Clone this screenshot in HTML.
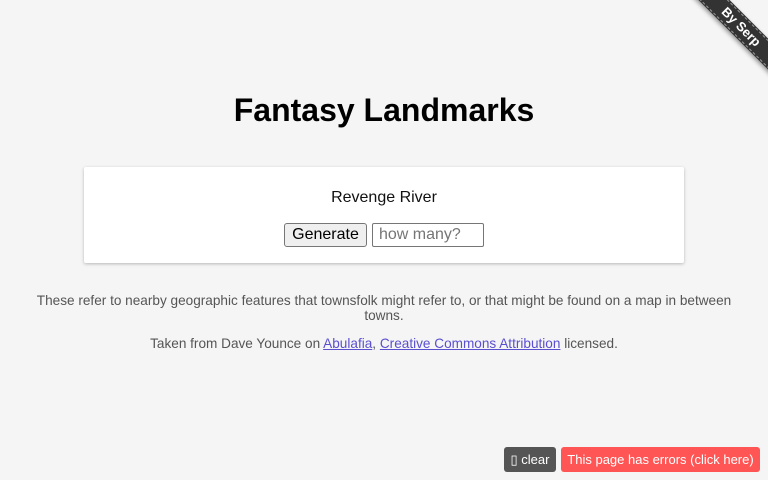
<!DOCTYPE html>
<html><head><meta charset="utf-8"><style>
html,body{margin:0;padding:0;}
body{width:768px;height:480px;background:#f5f5f5;font-family:"Liberation Sans",sans-serif;position:relative;overflow:hidden;}
h1{position:absolute;top:92px;left:0;width:768px;text-align:center;margin:0;font-size:32px;font-weight:bold;color:#000;line-height:36px;}
.card{position:absolute;left:84px;top:167px;width:600px;height:96px;background:#fff;box-shadow:0 1px 3px rgba(0,0,0,.25);border-radius:2px;}
.res{position:absolute;top:22px;width:100%;text-align:center;font-size:16px;color:#111;line-height:18px;}
.btn{position:absolute;left:200px;top:56px;width:83px;height:24px;box-sizing:border-box;border:1px solid #767676;border-radius:3px;background:#efefef;font-size:16px;text-align:center;line-height:22px;color:#000;}
.inp{position:absolute;left:288px;top:56px;width:112px;height:24px;box-sizing:border-box;border:1px solid #767676;border-radius:2px;background:#fff;font-size:16px;color:#757575;padding-left:6px;line-height:22px;}
p{position:absolute;left:30px;width:708px;text-align:center;margin:0;font-size:13.6px;color:#555;line-height:15px;}
a{color:#5a4fcf;text-decoration:underline;}
.rib{position:absolute;left:666px;top:16px;width:150px;height:22px;background:#333;transform:rotate(45deg);color:#fff;font-size:13px;font-weight:bold;text-align:center;line-height:22px;box-shadow:0 2px 4px rgba(0,0,0,.4);}
.rib span{display:block;border-top:1px dashed #999;border-bottom:1px dashed #999;margin-top:1px;line-height:18px;}
.clr{position:absolute;left:504px;top:447px;width:52px;height:25px;background:#555;color:#fff;border-radius:3px;font-size:13px;line-height:25px;text-align:center;}
.err{position:absolute;left:561px;top:447px;width:199px;height:25px;background:#f55;color:#fff;border-radius:3px;font-size:13px;line-height:25px;text-align:center;}
</style></head><body>
<div class="rib"><span>By Serp</span></div>
<h1>Fantasy Landmarks</h1>
<div class="card"><div class="res">Revenge River</div><div class="btn">Generate</div><div class="inp">how many?</div></div>
<p style="top:293px">These refer to nearby geographic features that townsfolk might refer to, or that might be found on a map in between towns.</p>
<p style="top:336px">Taken from Dave Younce on <a>Abulafia</a>, <a>Creative Commons Attribution</a> licensed.</p>
<div class="clr">▯ clear</div>
<div class="err">This page has errors (click here)</div>
</body></html>
